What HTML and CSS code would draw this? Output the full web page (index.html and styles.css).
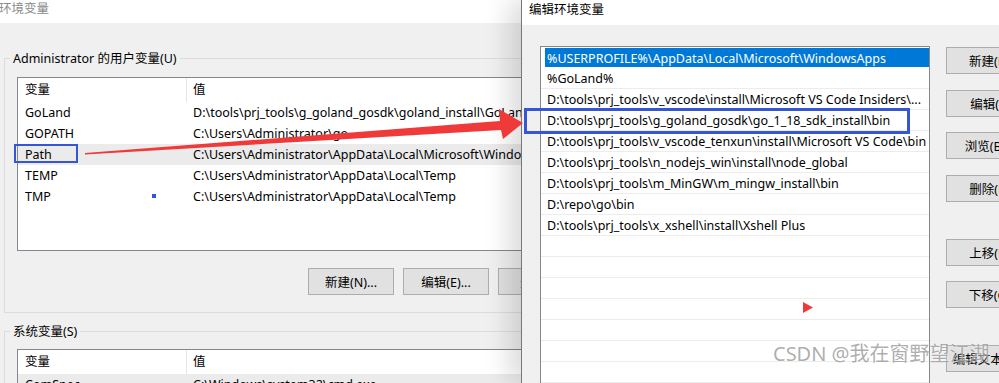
FILE: index.html
```html
<!DOCTYPE html>
<html>
<head>
    <title>环境变量</title>
	<link rel="stylesheet" href="styles.css">
</head>
<body>
<div class="desk">

	<div class="win env">
		<div class="title">环境变量</div>
		<div class="body">
			<div class="grp">
				<span class="cap">Administrator 的用户变量(U)</span>
				<div class="list">
					<div class="lhead"><span class="c1">变量</span><span class="c2">值</span></div>
					<div class="lrow"><span class="c1">GoLand</span><span class="c2">D:\tools\prj_tools\g_goland_gosdk\goland_install\GoLand 2022.1\bin</span></div>
					<div class="lrow"><span class="c1">GOPATH</span><span class="c2">C:\Users\Administrator\go</span></div>
					<div class="lrow hot"><span class="c1">Path</span><span class="c2">C:\Users\Administrator\AppData\Local\Microsoft\WindowsApps;%GoLand%</span></div>
					<div class="lrow"><span class="c1">TEMP</span><span class="c2">C:\Users\Administrator\AppData\Local\Temp</span></div>
					<div class="lrow"><span class="c1">TMP</span><span class="c2">C:\Users\Administrator\AppData\Local\Temp</span></div>
				</div>
				<div class="btns">
					<button class="btn">新建(N)...</button>
					<button class="btn">编辑(E)...</button>
					<button class="btn">删除(D)</button>
				</div>
			</div>
			<div class="grp sys">
				<span class="cap">系统变量(S)</span>
				<div class="list">
					<div class="lhead"><span class="c1">变量</span><span class="c2">值</span></div>
					<div class="lrow hot"><span class="c1">ComSpec</span><span class="c2">C:\Windows\system32\cmd.exe</span></div>
				</div>
			</div>
		</div>
	</div>

	<div class="win edit">
		<div class="title">编辑环境变量</div>
		<div class="body">
			<div class="plist">
				<div class="prow sel">%USERPROFILE%\AppData\Local\Microsoft\WindowsApps</div>
				<div class="prow">%GoLand%</div>
				<div class="prow">D:\tools\prj_tools\v_vscode\install\Microsoft VS Code Insiders\...</div>
				<div class="prow">D:\tools\prj_tools\g_goland_gosdk\go_1_18_sdk_install\bin</div>
				<div class="prow">D:\tools\prj_tools\v_vscode_tenxun\install\Microsoft VS Code\bin</div>
				<div class="prow">D:\tools\prj_tools\n_nodejs_win\install\node_global</div>
				<div class="prow">D:\tools\prj_tools\m_MinGW\m_mingw_install\bin</div>
				<div class="prow">D:\repo\go\bin</div>
				<div class="prow">D:\tools\prj_tools\x_xshell\install\Xshell Plus</div>
				<div class="prow"></div>
				<div class="prow"></div>
				<div class="prow"></div>
				<div class="prow"></div>
				<div class="prow"></div>
				<div class="prow"></div>
				<div class="prow"></div>
			</div>
			<div class="side">
				<button class="btn">新建(N)</button>
				<button class="btn">编辑(E)</button>
				<button class="btn">浏览(B)...</button>
				<button class="btn">删除(D)</button>
				<button class="btn gap">上移(U)</button>
				<button class="btn">下移(O)</button>
				<button class="btn gap">编辑文本(T)...</button>
			</div>
		</div>
	</div>

	<!-- annotations drawn over the screenshot -->
	<div class="mark mark-path"></div>
	<div class="mark mark-go"></div>
	<svg class="ink" width="999" height="383" viewBox="0 0 999 383">
		<polygon fill="#f03a3a" points="85,153 500,121 499,109 523,123 503,139 501,130 85,154.5"/>
		<polygon fill="#f03a3a" points="803,302 813,307.5 803,313"/>
		<rect x="152" y="194" width="4" height="4" fill="#3355dd"/>
	</svg>
	<div class="wm">CSDN @我在窗野望江湖</div>
</div>
</body>
</html>
```

FILE: styles.css
```css
body {
	margin: 0;
	font-family: "Noto Sans", "Noto Sans CJK SC", sans-serif;
	font-size: 12.5px;
	color: #000;
}
.desk {
	position: relative;
	width: 999px;
	height: 383px;
	overflow: hidden;
	background: #f0f0f0;
}

/* windows */
.win {
	position: absolute;
	top: 0;
	height: 383px;
	background: #f0f0f0;
	overflow: hidden;
}
.env {
	left: 0;
	width: 600px;
}
.edit {
	left: 521px;
	width: 520px;
	border-left: 1px solid #777;
	box-shadow: -12px 0 24px rgba(0, 0, 0, 0.14);
}
.title {
	background: #fff;
	height: 23px;
	line-height: 17px;
	white-space: nowrap;
}
.env .title {
	color: #8a8a8a;
	margin-left: -1px;
}
.edit .title {
	height: 25px;
	line-height: 20px;
	padding-left: 7px;
}

/* group boxes */
.env .body {
	padding: 35px 0 0 4px;
}
.grp {
	border: 1px solid #dcdcdc;
	padding: 0 0 17px 0;
}
.grp.sys {
	margin-top: 18px;
}
.cap {
	display: block;
	width: max-content;
	height: 17px;
	line-height: 17px;
	margin: -9px 0 0 5px;
	padding: 0 3px;
	background: #f0f0f0;
}
.list {
	margin: 10px 0 0 12px;
	height: 172px;
	border: 1px solid #828790;
	background: #fff;
}
.sys .list {
	margin-top: 9px;
}
.lhead, .lrow {
	display: flex;
	white-space: nowrap;
}
.lhead {
	height: 24px;
	line-height: 24px;
}
.lrow {
	height: 21px;
	line-height: 21px;
}
.lrow.hot {
	background: #ebebeb;
}
.c1 {
	width: 161px;
	padding-left: 7px;
	flex: none;
}
.lhead .c1 {
	border-right: 1px solid #e5e5e5;
}
.c2 {
	padding-left: 7px;
}
.lhead .c2 {
	padding-left: 6px;
}

.btns {
	display: flex;
	gap: 9px;
	margin: 17px 0 0 303px;
}
.btn {
	font: inherit;
	color: #000;
	width: 86px;
	height: 27px;
	padding: 0;
	background: #e1e1e1;
	border: 1px solid #adadad;
	flex: none;
	white-space: nowrap;
}

/* edit dialog */
.edit .body {
	display: flex;
	padding: 21px 0 0 18px;
	gap: 16px;
}
.plist {
	width: 388px;
	height: 400px;
	border: 1px solid #828790;
	background: #fff;
	flex: none;
}
.prow {
	height: 20px;
	line-height: 21px;
	padding-left: 6px;
	border-bottom: 1px solid #ececec;
	white-space: nowrap;
	overflow: hidden;
}
.prow.sel {
	margin: 1px 0 0 4px;
	height: 19px;
	padding-left: 2px;
	background: #0078d7;
	color: #fff;
	border-bottom-color: #fff;
}
.side {
	display: flex;
	flex-direction: column;
	gap: 15.5px;
	padding-top: 1px;
}
.side .btn {
	width: 88px;
}
.side .btn.gap {
	margin-top: 21.5px;
}

/* annotations */
.mark {
	position: absolute;
	border: 2px solid #3656d4;
}
.mark-path {
	left: 14px;
	top: 144px;
	width: 60px;
	height: 15px;
}
.mark-go {
	left: 524px;
	top: 108px;
	width: 380px;
	height: 20px;
	border-width: 3px;
}
.ink {
	position: absolute;
	left: 0;
	top: 0;
}
.wm {
	position: absolute;
	left: 773px;
	top: 341px;
	font-size: 20px;
	line-height: 26px;
	color: rgba(120, 120, 120, 0.6);
	text-shadow: 0 0 2px #fff;
	white-space: nowrap;
}
```
